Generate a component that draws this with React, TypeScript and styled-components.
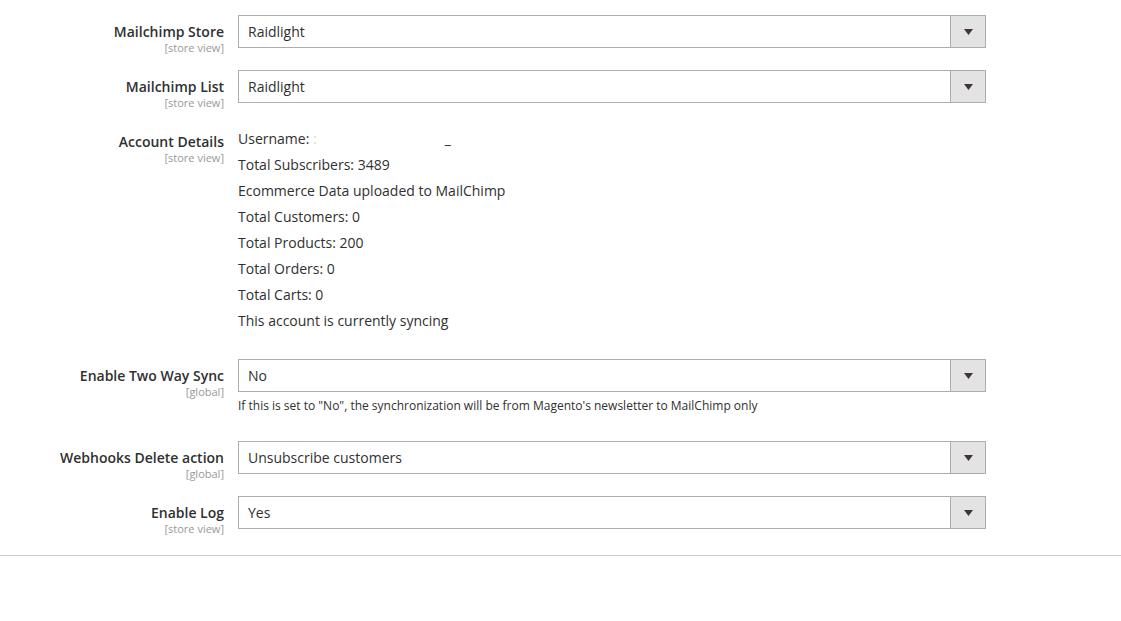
import styled, { createGlobalStyle } from "styled-components";

const GlobalStyle = createGlobalStyle`
  html, body {
    margin: 0;
    padding: 0;
    background: #ffffff;
    font-family: "Open Sans", "Liberation Sans", sans-serif;
    color: #303030;
  }
`;

const Page = styled.div`
  width: 1121px;
  min-height: 621px;
  padding-top: 15px;
  box-sizing: border-box;
`;

const Fieldset = styled.div`
  display: flex;
  flex-direction: column;
  gap: 22px;
  padding-bottom: 26px;
  border-bottom: 1px solid #cccccc;
`;

const Row = styled.div<{ $extra?: number }>`
  display: grid;
  grid-template-columns: 224px 748px;
  column-gap: 14px;
  align-items: start;
  padding-bottom: ${({ $extra }) => $extra ?? 0}px;
`;

const LabelCell = styled.div`
  text-align: right;
  padding-top: 7px;
  margin-bottom: -6px;
`;

const LabelText = styled.div`
  font-size: 14px;
  font-weight: 600;
  line-height: 19px;
  color: #303030;
`;

const Scope = styled.div`
  font-size: 11px;
  line-height: 13px;
  color: #999999;
`;

const Control = styled.div`
  display: flex;
  flex-direction: column;
`;

const SelectBox = styled.div`
  display: flex;
  height: 33px;
  box-sizing: border-box;
  border: 1px solid #adadad;
  background: #ffffff;
`;

const SelectValue = styled.div`
  flex: 1;
  display: flex;
  align-items: center;
  padding-left: 9px;
  font-size: 14px;
  color: #303030;
`;

const ArrowBox = styled.div`
  width: 34px;
  border-left: 1px solid #adadad;
  background: #e3e3e3;
  display: flex;
  align-items: center;
  justify-content: center;
`;

const Note = styled.div`
  margin-top: 5px;
  font-size: 12px;
  line-height: 17px;
  color: #303030;
`;

const Details = styled.div`
  display: flex;
  flex-direction: column;
  padding-top: 1px;
`;

const DetailLine = styled.div`
  font-size: 14px;
  line-height: 26px;
  color: #303030;
  white-space: nowrap;
`;

const Faint = styled.span`
  color: #e2d8cf;
`;

const Mark = styled.span`
  margin-left: 128px;
  color: #303030;
`;

function Arrow() {
  return (
    <svg width="9" height="6" viewBox="0 0 9 6">
      <path d="M0 0 L9 0 L4.5 6 Z" fill="#41362f" />
    </svg>
  );
}

function Select({ value }: { value: string }) {
  return (
    <SelectBox>
      <SelectValue>{value}</SelectValue>
      <ArrowBox>
        <Arrow />
      </ArrowBox>
    </SelectBox>
  );
}

function Label({ text, scope }: { text: string; scope: string }) {
  return (
    <LabelCell>
      <LabelText>{text}</LabelText>
      <Scope>[{scope}]</Scope>
    </LabelCell>
  );
}

const accountLines = [
  "Total Subscribers: 3489",
  "Ecommerce Data uploaded to MailChimp",
  "Total Customers: 0",
  "Total Products: 200",
  "Total Orders: 0",
  "Total Carts: 0",
  "This account is currently syncing",
];

export default function App() {
  return (
    <Page>
      <GlobalStyle />
      <Fieldset>
        <Row>
          <Label text="Mailchimp Store" scope="store view" />
          <Control>
            <Select value="Raidlight" />
          </Control>
        </Row>
        <Row>
          <Label text="Mailchimp List" scope="store view" />
          <Control>
            <Select value="Raidlight" />
          </Control>
        </Row>
        <Row $extra={3}>
          <Label text="Account Details" scope="store view" />
          <Details>
            <DetailLine>
              Username: <Faint>:</Faint>
              <Mark>_</Mark>
            </DetailLine>
            {accountLines.map((line) => (
              <DetailLine key={line}>{line}</DetailLine>
            ))}
          </Details>
        </Row>
        <Row $extra={5}>
          <Label text="Enable Two Way Sync" scope="global" />
          <Control>
            <Select value="No" />
            <Note>
              If this is set to "No", the synchronization will be from Magento's
              newsletter to MailChimp only
            </Note>
          </Control>
        </Row>
        <Row>
          <Label text="Webhooks Delete action" scope="global" />
          <Control>
            <Select value="Unsubscribe customers" />
          </Control>
        </Row>
        <Row>
          <Label text="Enable Log" scope="store view" />
          <Control>
            <Select value="Yes" />
          </Control>
        </Row>
      </Fieldset>
    </Page>
  );
}
